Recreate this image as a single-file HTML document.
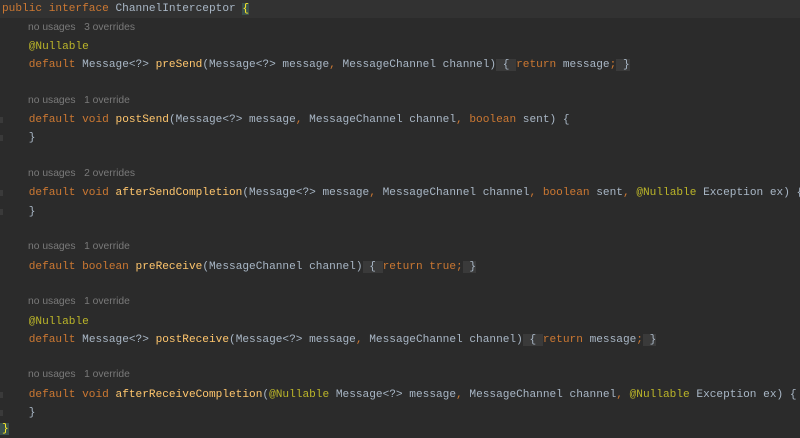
<!DOCTYPE html>
<html><head><meta charset="utf-8"><style>
html,body{margin:0;padding:0}
body{width:800px;height:435px;background:#2b2b2b;position:relative;overflow:hidden;font-family:"Liberation Mono",monospace;font-size:11.14px;color:#a9b7c6}
.l{position:absolute;left:2px;white-space:pre;height:18px;line-height:18px}
.k{color:#cc7832}.m{color:#ffc66d}.a{color:#bbb529}
.h{position:absolute;left:28px;font-family:"Liberation Sans",sans-serif;font-size:10.3px;color:#7a7a7a;line-height:14px;white-space:pre}
.f{background:#3a3a3a}
.cur{position:absolute;left:0;top:0;width:800px;height:18px;background:#323232}
.g{position:absolute;left:0;width:3px;height:6px;background:#3a3a3a}
</style></head><body>
<div class="cur"></div>
<div class="l" style="top:0"><span class="k">public interface </span>ChannelInterceptor <span style="background:#3b514d;color:#ffef28">{</span></div>
<div class="h" style="top:21px">no usages   3 overrides</div>
<div class="l" style="top:38px">    <span class="a">@Nullable</span></div>
<div class="l" style="top:56px">    <span class="k">default </span>Message&lt;?&gt; <span class="m">preSend</span>(Message&lt;?&gt; message<span class="k">, </span>MessageChannel channel)<span class="f"> { </span><span class="k">return </span>message<span class="k">;</span><span class="f"> }</span></div>
<div class="h" style="top:94px">no usages   1 override</div>
<div class="l" style="top:111px">    <span class="k">default void </span><span class="m">postSend</span>(Message&lt;?&gt; message<span class="k">, </span>MessageChannel channel<span class="k">, boolean </span>sent) {</div>
<div class="l" style="top:129px">    }</div>
<div class="h" style="top:167px">no usages   2 overrides</div>
<div class="l" style="top:184px">    <span class="k">default void </span><span class="m">afterSendCompletion</span>(Message&lt;?&gt; message<span class="k">, </span>MessageChannel channel<span class="k">, boolean </span>sent<span class="k">, </span><span class="a">@Nullable</span> Exception ex) {</div>
<div class="l" style="top:203px">    }</div>
<div class="h" style="top:240px">no usages   1 override</div>
<div class="l" style="top:258px">    <span class="k">default boolean </span><span class="m">preReceive</span>(MessageChannel channel)<span class="f"> { </span><span class="k">return true;</span><span class="f"> }</span></div>
<div class="h" style="top:295px">no usages   1 override</div>
<div class="l" style="top:313px">    <span class="a">@Nullable</span></div>
<div class="l" style="top:331px">    <span class="k">default </span>Message&lt;?&gt; <span class="m">postReceive</span>(Message&lt;?&gt; message<span class="k">, </span>MessageChannel channel)<span class="f"> { </span><span class="k">return </span>message<span class="k">;</span><span class="f"> }</span></div>
<div class="h" style="top:368px">no usages   1 override</div>
<div class="l" style="top:386px">    <span class="k">default void </span><span class="m">afterReceiveCompletion</span>(<span class="a">@Nullable</span> Message&lt;?&gt; message<span class="k">, </span>MessageChannel channel<span class="k">, </span><span class="a">@Nullable</span> Exception ex) {</div>
<div class="l" style="top:404px">    }</div>
<div class="l" style="top:420px;left:0"><span style="background:#3b514d;color:#ffef28;padding-left:2px">}</span></div>
<div class="g" style="top:117px"></div><div class="g" style="top:135px"></div>
<div class="g" style="top:190px"></div><div class="g" style="top:209px"></div>
<div class="g" style="top:392px"></div><div class="g" style="top:410px"></div>
</body></html>
